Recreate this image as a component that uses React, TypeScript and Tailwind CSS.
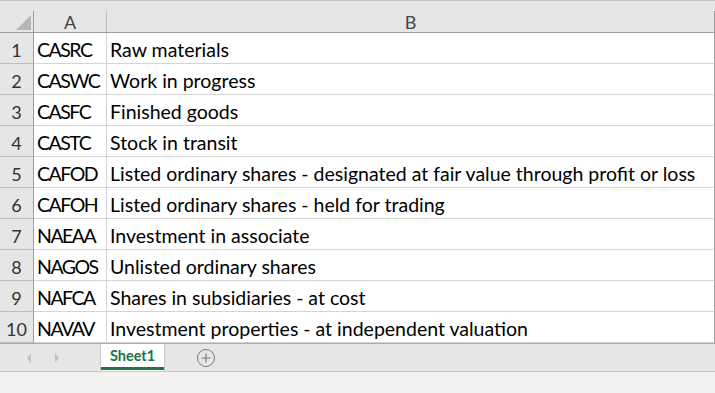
import { Plus } from 'lucide-react';

const rows = [
  { code: 'CASRC', name: 'Raw materials' },
  { code: 'CASWC', name: 'Work in progress' },
  { code: 'CASFC', name: 'Finished goods' },
  { code: 'CASTC', name: 'Stock in transit' },
  { code: 'CAFOD', name: 'Listed ordinary shares - designated at fair value through profit or loss' },
  { code: 'CAFOH', name: 'Listed ordinary shares - held for trading' },
  { code: 'NAEAA', name: 'Investment in associate' },
  { code: 'NAGOS', name: 'Unlisted ordinary shares' },
  { code: 'NAFCA', name: 'Shares in subsidiaries - at cost' },
  { code: 'NAVAV', name: 'Investment properties - at independent valuation' },
];

export default function App() {
  return (
    <div
      className="w-[715px] h-[393px] overflow-hidden bg-white flex flex-col text-black"
      style={{ fontFamily: 'Lato, "Liberation Sans", sans-serif' }}
    >
      {/* strip above headers */}
      <div className="h-[11px] bg-[#e6e6e6] border-t border-[#c6c6c6]" />

      {/* Column headers */}
      <div className="flex h-[22px] bg-[#e6e6e6] border-b border-[#9e9e9e] text-[18px] text-[#444]">
        <div className="w-[34px] border-r border-[#9e9e9e] flex items-end justify-end pr-[2px] pb-[2px]">
          <div className="w-0 h-0 border-l-[15px] border-l-transparent border-b-[15px] border-b-[#b6b6b6]" />
        </div>
        <div className="w-[73px] border-r border-[#bdbdbd] flex items-center justify-center leading-none">A</div>
        <div className="flex-1 border-r border-[#9e9e9e] flex items-center justify-center leading-none">B</div>
      </div>

      {/* Rows */}
      {rows.map((r, i) => (
        <div key={r.code} className="flex h-[31px] text-[19.5px]">
          <div className="w-[34px] bg-[#e6e6e6] border-r border-b border-[#bdbdbd] border-r-[#9e9e9e] flex items-center justify-center pt-[4px] text-[18px] text-[#333]">
            {i + 1}
          </div>
          <div className="w-[73px] border-r border-b border-[#d4d4d4] flex items-center pl-[3px] pt-[4px] whitespace-nowrap tracking-[-1.5px]">
            {r.code}
          </div>
          <div className="flex-1 border-r border-b border-[#d4d4d4] border-r-[#9e9e9e] flex items-center pl-[3px] pt-[4px] whitespace-nowrap">
            {r.name}
          </div>
        </div>
      ))}

      {/* Sheet tab bar */}
      <div className="flex h-[29px] bg-[#e6e6e6] border-t border-[#ababab] border-b border-b-[#c8c8c8]">
        <div className="w-[100px] flex items-center">
          <div className="ml-[27px] w-0 h-0 border-y-[5px] border-y-transparent border-r-[4px] border-r-[#c3c3c3]" />
          <div className="ml-[24px] w-0 h-0 border-y-[5px] border-y-transparent border-l-[4px] border-l-[#c3c3c3]" />
        </div>
        <div className="w-[65px] bg-white border-x border-[#c6c6c6] flex flex-col">
          <div className="flex-1 flex items-center justify-center text-[14.5px] font-bold text-[#217346]">
            Sheet1
          </div>
          <div className="h-[3px] bg-[#217346] mb-[1px]" />
        </div>
        <div className="ml-[32px] flex items-center">
          <Plus className="w-[18px] h-[18px] text-[#7a7a7a] rounded-full border-[1.5px] border-[#7a7a7a] p-[1px]" strokeWidth={2} />
        </div>
      </div>

      <div className="flex-1 bg-[#f3f2f1]" />
    </div>
  );
}
